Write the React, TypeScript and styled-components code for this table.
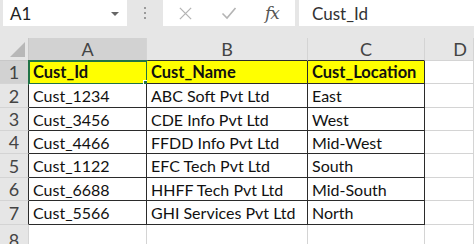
import React from 'react';
import styled, { createGlobalStyle, css } from 'styled-components';

const GlobalStyle = createGlobalStyle`
  html, body {
    margin: 0;
    padding: 0;
    background: #e6e6e6;
    overflow: hidden;
  }
  body {
    font-family: Lato, "Liberation Sans", sans-serif;
  }
`;

const Page = styled.div`
  width: 474px;
  height: 244px;
  overflow: hidden;
  background: #e6e6e6;
`;

const FormulaBar = styled.div`
  display: flex;
  align-items: stretch;
  height: 26px;
  padding-left: 3px;
  margin-bottom: 12px;
`;

const NameBox = styled.div`
  width: 124px;
  background: #fff;
  display: flex;
  align-items: center;
  justify-content: space-between;
  padding: 0 8px 0 7px;
  box-sizing: border-box;
  font-size: 17px;
  color: #222;
`;

const DropArrow = styled.span`
  width: 0;
  height: 0;
  border-left: 4px solid transparent;
  border-right: 4px solid transparent;
  border-top: 4px solid #666;
  margin-top: 2px;
`;

const Grip = styled.div`
  width: 36px;
  display: flex;
  flex-direction: column;
  align-items: center;
  justify-content: center;
  gap: 3px;
  & span {
    width: 2px;
    height: 2px;
    background: #9a9a9a;
  }
`;

const ButtonsBox = styled.div`
  width: 132px;
  background: #fff;
  display: flex;
  align-items: center;
  padding-left: 15px;
  gap: 28px;
  box-sizing: border-box;
`;

const Fx = styled.span`
  font-family: "DejaVu Serif", "Liberation Serif", serif;
  font-style: italic;
  font-size: 17px;
  color: #555;
  letter-spacing: -1px;
`;

const FormulaInput = styled.div`
  flex: 1;
  margin-left: 4px;
  background: #fff;
  display: flex;
  align-items: center;
  padding-left: 13px;
  font-size: 17px;
  color: #333;
`;

const Grid = styled.div`
  display: grid;
  grid-template-columns: 29px 118px 161px 117px 1fr;
  grid-template-rows: 23px 23px 24px 23px 23px 24px 23px 24px 30px;
  background: #fff;
`;

type Tone = 'plain' | 'dark' | 'sel';

const lineColor = (t: Tone) => (t === 'sel' ? '#217346' : t === 'dark' ? '#2b2b2b' : '#d4d4d4');

const HeaderCell = styled.div<{ $active?: boolean; $right: Tone; $bottom: Tone; $end?: boolean }>`
  background: ${({ $active }) => ($active ? '#d2d2d2' : '#e6e6e6')};
  color: #444;
  font-size: 18px;
  display: flex;
  align-items: center;
  justify-content: ${({ $end }) => ($end ? 'flex-end' : 'center')};
  padding-right: ${({ $end }) => ($end ? '6px' : '0')};
  box-sizing: border-box;
  border-right: 1px solid ${({ $right }) => lineColor($right)};
  border-bottom: 1px solid ${({ $bottom }) => lineColor($bottom)};
  overflow: hidden;
`;

const Corner = styled.div`
  background: #e6e6e6;
  border-right: 1px solid #c8c8c8;
  border-bottom: 1px solid #c8c8c8;
  box-sizing: border-box;
  position: relative;
  &::after {
    content: '';
    position: absolute;
    right: 3px;
    bottom: 3px;
    width: 0;
    height: 0;
    border-left: 15px solid transparent;
    border-bottom: 15px solid #b8b8b8;
  }
`;

const Cell = styled.div<{ $head?: boolean; $right: Tone; $bottom: Tone; $selected?: boolean }>`
  background: ${({ $head }) => ($head ? '#ffff00' : '#fff')};
  font-weight: ${({ $head }) => ($head ? 700 : 400)};
  font-size: ${({ $head }) => ($head ? '16.5px' : '16px')};
  color: #111;
  padding-left: 4px;
  display: flex;
  align-items: center;
  white-space: nowrap;
  box-sizing: border-box;
  border-right: 1px solid ${({ $right }) => lineColor($right)};
  border-bottom: 1px solid ${({ $bottom }) => lineColor($bottom)};
  position: relative;
  ${({ $selected }) =>
    $selected &&
    css`
      outline: 2px solid #217346;
      outline-offset: -1px;
      &::after {
        content: '';
        position: absolute;
        right: -4px;
        bottom: -4px;
        width: 5px;
        height: 5px;
        background: #217346;
        border: 1px solid #fff;
      }
    `}
`;

const rows: string[][] = [
  ['Cust_Id', 'Cust_Name', 'Cust_Location'],
  ['Cust_1234', 'ABC Soft Pvt Ltd', 'East'],
  ['Cust_3456', 'CDE Info Pvt Ltd', 'West'],
  ['Cust_4466', 'FFDD Info Pvt Ltd', 'Mid-West'],
  ['Cust_1122', 'EFC Tech Pvt Ltd', 'South'],
  ['Cust_6688', 'HHFF Tech Pvt Ltd', 'Mid-South'],
  ['Cust_5566', 'GHI Services Pvt Ltd', 'North'],
];

const Cross = () => (
  <svg width="15" height="15" viewBox="0 0 16 16">
    <path d="M2 2 L14 14 M14 2 L2 14" stroke="#b4b4b4" strokeWidth="1.4" fill="none" />
  </svg>
);

const Check = () => (
  <svg width="16" height="16" viewBox="0 0 16 16">
    <path d="M1.5 8.5 L6 13 L14.5 3" stroke="#b4b4b4" strokeWidth="1.6" fill="none" />
  </svg>
);

export default function App() {
  return (
    <Page>
      <GlobalStyle />
      <FormulaBar>
        <NameBox>
          A1
          <DropArrow />
        </NameBox>
        <Grip>
          <span />
          <span />
          <span />
        </Grip>
        <ButtonsBox>
          <Cross />
          <Check />
          <Fx>fx</Fx>
        </ButtonsBox>
        <FormulaInput>Cust_Id</FormulaInput>
      </FormulaBar>
      <Grid>
        <Corner />
        <HeaderCell $active $right="plain" $bottom="sel">A</HeaderCell>
        <HeaderCell $right="plain" $bottom="dark">B</HeaderCell>
        <HeaderCell $right="plain" $bottom="dark">C</HeaderCell>
        <HeaderCell $end $right="plain" $bottom="plain">D</HeaderCell>
        {rows.map((r, i) => (
          <React.Fragment key={i}>
            <HeaderCell $active={i === 0} $right={i === 0 ? 'sel' : 'dark'} $bottom="plain">
              {i + 1}
            </HeaderCell>
            {r.map((v, j) => (
              <Cell key={j} $head={i === 0} $selected={i === 0 && j === 0} $right="dark" $bottom="dark">
                {v}
              </Cell>
            ))}
            <Cell $right="plain" $bottom="plain" />
          </React.Fragment>
        ))}
        <HeaderCell $right="plain" $bottom="plain">8</HeaderCell>
        <Cell $right="plain" $bottom="plain" />
        <Cell $right="plain" $bottom="plain" />
        <Cell $right="plain" $bottom="plain" />
        <Cell $right="plain" $bottom="plain" />
      </Grid>
    </Page>
  );
}
